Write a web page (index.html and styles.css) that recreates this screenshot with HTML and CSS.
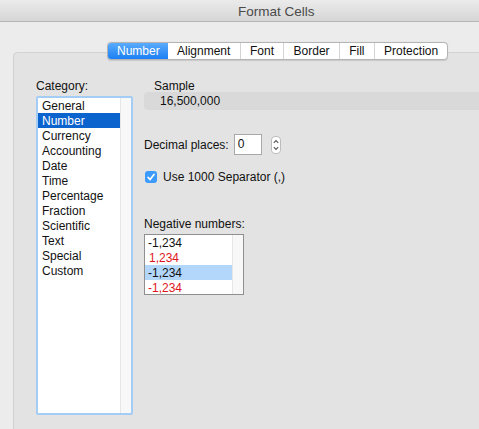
FILE: index.html
```html
<!DOCTYPE html>
<html>
<head>
<meta charset="utf-8">
<link rel="stylesheet" href="styles.css">
</head>
<body>
<div class="window">
  <div class="titlebar"><span class="title">Format Cells</span></div>
  <div class="main">
    <div class="tabs">
      <div class="tab active">Number</div>
      <div class="tab">Alignment</div>
      <div class="tab">Font</div>
      <div class="tab">Border</div>
      <div class="tab">Fill</div>
      <div class="tab">Protection</div>
    </div>
    <div class="panel">
      <div class="col-left">
        <div class="label">Category:</div>
        <div class="catlist">
          <div class="items">
            <div class="item">General</div>
            <div class="item selected">Number</div>
            <div class="item">Currency</div>
            <div class="item">Accounting</div>
            <div class="item">Date</div>
            <div class="item">Time</div>
            <div class="item">Percentage</div>
            <div class="item">Fraction</div>
            <div class="item">Scientific</div>
            <div class="item">Text</div>
            <div class="item">Special</div>
            <div class="item">Custom</div>
          </div>
          <div class="track"></div>
        </div>
      </div>
      <div class="col-right">
        <div class="label indent">Sample</div>
        <div class="sample">16,500,000</div>
        <div class="decimal-row">
          <span class="label">Decimal places:</span>
          <div class="input">0</div>
          <div class="stepper">
            <svg width="10" height="18" viewBox="0 0 10 18">
              <path d="M2.8 6.8 L5 4.6 L7.2 6.8" fill="none" stroke="#555" stroke-width="1.1"/>
              <path d="M2.8 11.2 L5 13.4 L7.2 11.2" fill="none" stroke="#555" stroke-width="1.1"/>
            </svg>
          </div>
        </div>
        <div class="check-row">
          <div class="checkbox">
            <svg width="12" height="12" viewBox="0 0 12 12">
              <path d="M3 6.3 L5.1 8.6 L9 3.4" fill="none" stroke="#fff" stroke-width="1.7" stroke-linecap="round" stroke-linejoin="round"/>
            </svg>
          </div>
          <span class="label">Use 1000 Separator (,)</span>
        </div>
        <div class="label neg-label">Negative numbers:</div>
        <div class="neglist">
          <div class="items">
            <div class="nitem">-1,234</div>
            <div class="nitem red pos">1,234</div>
            <div class="nitem selected-light">-1,234</div>
            <div class="nitem red">-1,234</div>
          </div>
          <div class="track"></div>
        </div>
      </div>
    </div>
  </div>
</div>
</body>
</html>
```

FILE: styles.css
```css
html, body {
  margin: 0;
  padding: 0;
}
body {
  width: 479px;
  height: 429px;
  overflow: hidden;
  background: #ececec;
  font-family: "Liberation Sans", Arial, sans-serif;
  font-size: 12px;
  color: #111;
}
.window {
  width: 479px;
  height: 429px;
  overflow: hidden;
}
.titlebar {
  height: 21px;
  border-bottom: 1px solid #b6b6b6;
  background: linear-gradient(#ebebeb, #d6d6d6);
  display: flex;
  align-items: center;
  padding-left: 238px;
}
.title {
  font-size: 13.5px;
  color: #4a4a4a;
  line-height: 21px;
  padding-top: 1px;
}
.main {
  padding: 20px 0 0 13px;
}
.tabs {
  position: relative;
  z-index: 2;
  display: flex;
  margin-left: 94px;
  width: max-content;
  height: 18px;
  box-sizing: border-box;
  border: 1px solid #b4b4b4;
  border-radius: 4px;
  background: #fff;
  overflow: hidden;
  box-shadow: 0 0.5px 1px rgba(0,0,0,0.12);
}
.tab {
  padding: 0 9.3px;
  line-height: 17px;
  color: #111;
  border-left: 1px solid #d4d4d4;
}
.tab:first-child {
  border-left: none;
}
.tab.active {
  background: linear-gradient(#5aacfc, #1c7ff3);
  color: #fff;
  padding: 0 8px 0 9px;
}
.tab.active + .tab {
  border-left: none;
}
.panel {
  margin-top: -8px;
  width: 520px;
  height: 420px;
  box-sizing: border-box;
  background: #e3e3e3;
  border: 1px solid #d2d2d2;
  border-radius: 4px;
  padding: 25px 0 0 22px;
  display: flex;
  gap: 11px;
}
.label {
  line-height: 16px;
  color: #111;
}
.indent {
  padding-left: 10px;
}
.col-left {
  width: 97px;
  display: flex;
  flex-direction: column;
}
.catlist {
  margin-top: 2px;
  width: 97px;
  height: 319px;
  box-sizing: border-box;
  border: 2px solid #a3cdf4;
  border-radius: 2px;
  background: #fff;
  display: flex;
}
.catlist .items {
  width: 82px;
}
.catlist .track {
  flex: 1;
  background: #f8f8f8;
  border-left: 1px solid #e6e6e6;
}
.item {
  height: 15px;
  line-height: 17px;
  padding-left: 4px;
  overflow: hidden;
}
.item.selected {
  background: #0b63cd;
  color: #fff;
}
.col-right {
  display: flex;
  flex-direction: column;
}
.sample {
  margin-top: -2px;
  width: 400px;
  height: 18px;
  line-height: 19px;
  box-sizing: border-box;
  background: #d9d9d9;
  border-radius: 4px;
  padding-left: 16px;
}
.decimal-row {
  margin-top: 24px;
  display: flex;
  align-items: center;
}
.input {
  margin-left: 5px;
  width: 28px;
  height: 21px;
  box-sizing: border-box;
  border: 1px solid #a8a8a8;
  background: #fff;
  line-height: 19px;
  padding-left: 3px;
}
.stepper {
  margin-left: 9px;
  width: 10px;
  height: 18px;
  box-sizing: border-box;
  border: 1px solid #bdbdbd;
  border-radius: 4px;
  background: #fff;
  display: flex;
  align-items: center;
  justify-content: center;
}
.stepper svg {
  display: block;
  flex: none;
}
.check-row {
  margin-top: 14px;
  display: flex;
  align-items: center;
  gap: 6px;
  padding-left: 1px;
}
.checkbox {
  width: 12px;
  height: 12px;
  border-radius: 3px;
  background: #3c9afc;
  display: flex;
}
.checkbox svg {
  display: block;
}
.neg-label {
  margin-top: 31px;
}
.neglist {
  margin-top: 2px;
  width: 100px;
  height: 61px;
  box-sizing: border-box;
  border: 1px solid #8f8f8f;
  background: #fff;
  display: flex;
}
.neglist .items {
  width: 87px;
}
.neglist .track {
  flex: 1;
  background: #f8f8f8;
  border-left: 1px solid #e6e6e6;
}
.nitem {
  height: 15px;
  line-height: 16px;
  padding-left: 3px;
  overflow: hidden;
}
.nitem.red {
  color: #e0161e;
}
.nitem.pos {
  padding-left: 4px;
}
.nitem.selected-light {
  background: #b3d7fa;
}
```
